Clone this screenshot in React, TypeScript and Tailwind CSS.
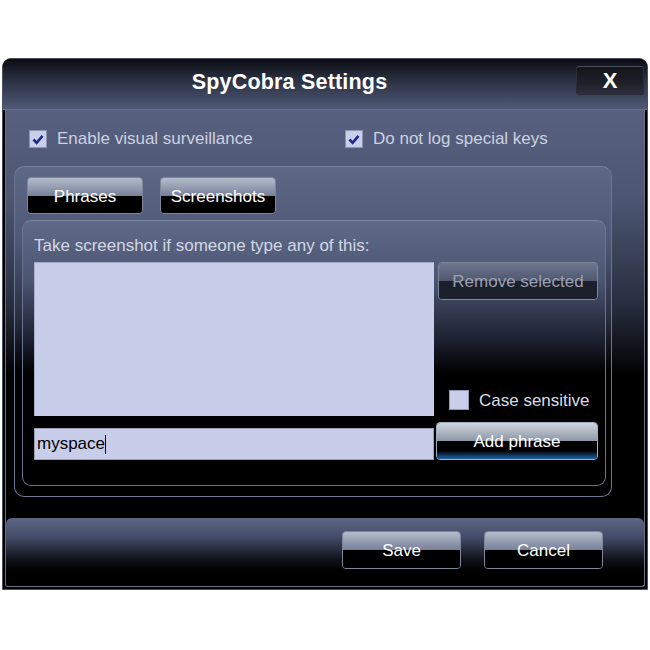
import React from 'react';

const font = "font-['Liberation_Sans',Arial,sans-serif]";

const Check: React.FC<{ checked?: boolean }> = ({ checked }) => (
  <span className="w-[18px] h-[18px] shrink-0 bg-[#c9cfea] border border-[#8d94b4] flex items-center justify-center">
    {checked && (
      <svg width="12" height="11" viewBox="0 0 12 11">
        <path d="M1.5 5.5 L4.6 8.8 L10.5 1.8" fill="none" stroke="#1b2a8c" strokeWidth="2.6" />
      </svg>
    )}
  </span>
);

type BtnProps = { label: string; w: string; h?: string; variant?: 'normal' | 'disabled' | 'active' };

// glossy two-tone skin button: light gradient on top, black on the bottom
const SkinButton: React.FC<BtnProps> = ({ label, w, h = 'h-[38px]', variant = 'normal' }) => {
  const top =
    variant === 'disabled'
      ? 'bg-[linear-gradient(to_bottom,#6e7790,#4f576c)]'
      : variant === 'active'
        ? 'bg-[linear-gradient(to_bottom,#cfd6de,#8c96a6)]'
        : 'bg-[linear-gradient(to_bottom,#b4bccb,#77809a)]';
  const bottom =
    variant === 'disabled'
      ? 'bg-[#1c1f2c]'
      : variant === 'active'
        ? 'bg-[linear-gradient(to_bottom,#000_0%,#000_55%,#1f66ad_100%)]'
        : 'bg-black';
  const text = variant === 'disabled' ? 'text-[#9aa0b2]' : 'text-white';
  const border = variant === 'active' ? 'border-[#9fb1c4]' : 'border-[#7e869a]';
  return (
    <div className={`${w} ${h} shrink-0 relative rounded-[4px] border ${border} overflow-hidden flex flex-col`}>
      <div className={`flex-1 ${top}`} />
      <div className={`flex-1 ${bottom}`} />
      <span className={`absolute inset-0 flex items-center justify-center pt-[2px] text-[17px] ${text}`}>{label}</span>
    </div>
  );
};

const App: React.FC = () => {
  return (
    <div className={`w-[650px] h-[650px] bg-white ${font}`}>
      <div className="ml-[2px] pt-[58px]">
        <div className="w-[646px] h-[532px] rounded-t-[9px] border border-[#4c505e] bg-black flex flex-col overflow-hidden">
          {/* title bar */}
          <div className="h-[51px] shrink-0 flex items-start bg-[linear-gradient(to_bottom,#0b0c11_0%,#262b3b_35%,#4f5977_100%)] border-b border-[#66708e]">
            <div className="flex-1 h-full flex items-center justify-center text-white font-bold text-[21.5px] tracking-[0.2px] pb-[4px]">
              SpyCobra Settings
            </div>
            <div className="mt-[7px] mr-[3px] w-[68px] h-[29px] rounded-[3px] border border-[#2a2d38] border-t-[#4a4e5c] bg-[linear-gradient(to_bottom,#14151b,#1e2029_60%,#2c303e)] flex items-center justify-center text-white font-black text-[22px]">
              X
            </div>
          </div>

          {/* body */}
          <div className="flex-1 mx-[2px] mb-[2px] border-x border-b border-[#6c7086] rounded-b-[3px] flex flex-col bg-[linear-gradient(to_bottom,#57617f_0%,#4d5774_18%,#2a3042_40%,#000_56%)]">
            <div className="pt-[21px] h-[37px] flex items-center text-[17px] text-[#cdd1e0]">
              <div className="pl-[23px] w-[339px] flex items-center gap-[10px]">
                <Check checked />
                <span>Enable visual surveillance</span>
              </div>
              <div className="flex items-center gap-[10px]">
                <Check checked />
                <span>Do not log special keys</span>
              </div>
            </div>

            {/* outer panel */}
            <div className="mt-[19px] ml-[8px] w-[598px] h-[331px] rounded-[10px] border border-[#6e7590] border-t-[#75809c] bg-[linear-gradient(to_bottom,#5d6886_0%,#4f5977_22%,#2a3043_45%,#000_62%)] flex flex-col">
              <div className="pt-[10px] pl-[12px] flex gap-[17px]">
                <SkinButton label="Phrases" w="w-[116px]" h="h-[37px]" />
                <SkinButton label="Screenshots" w="w-[116px]" h="h-[37px]" />
              </div>

              {/* inner panel */}
              <div className="mt-[6px] ml-[7px] w-[584px] h-[266px] rounded-[9px] border border-[#6c7390] border-t-[#7a84a0] bg-[linear-gradient(to_bottom,#5f6a88_0%,#4c5673_22%,#1c2030_45%,#000_58%)] flex flex-col pl-[11px] pr-[6px]">
                <div className="pt-[12px] h-[41px] text-[17px] text-[#d3d7e6]">
                  Take screenshot if someone type any of this:
                </div>
                <div className="flex gap-[4px]">
                  <div className="w-[400px] h-[154px] shrink-0 bg-[#c8cee9] border-t border-l border-[#a8aec8]" />
                  <div className="flex-1 flex flex-col justify-between pb-[3px]">
                    <SkinButton label="Remove selected" w="w-[160px]" variant="disabled" />
                    <div className="flex items-center gap-[10px] pl-[11px] text-[17px] text-[#d8dcea]">
                      <span className="w-[20px] h-[20px] bg-[#c9cfea] border border-[#8d94b4]" />
                      <span>Case sensitive</span>
                    </div>
                  </div>
                </div>
                <div className="mt-[6px] flex items-end gap-[2px]">
                  <div className="w-[400px] h-[32px] shrink-0 bg-[#c8cee9] border border-[#9aa0b8] flex items-center pl-[2px] text-[17px] text-black">
                    myspace<span className="w-[1px] h-[19px] bg-black" />
                  </div>
                  <SkinButton label="Add phrase" w="w-[162px]" variant="active" />
                </div>
              </div>
            </div>

            {/* bottom bar */}
            <div className="mt-[21px] h-[67px] rounded-[6px] bg-[linear-gradient(to_bottom,#5c6684_0%,#414a66_30%,#10121a_62%,#000_80%)] flex items-start justify-end gap-[23px] pt-[13px] pr-[41px]">
              <SkinButton label="Save" w="w-[119px]" />
              <SkinButton label="Cancel" w="w-[119px]" />
            </div>
          </div>
        </div>
      </div>
    </div>
  );
};

export default App;
